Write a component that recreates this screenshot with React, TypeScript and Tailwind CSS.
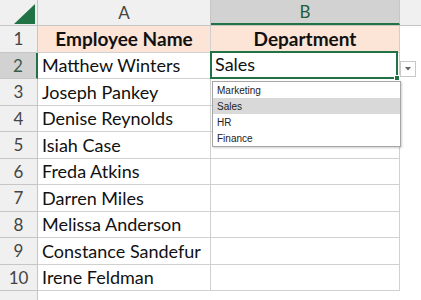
const names = [
  "Matthew Winters",
  "Joseph Pankey",
  "Denise Reynolds",
  "Isiah Case",
  "Freda Atkins",
  "Darren Miles",
  "Melissa Anderson",
  "Constance Sandefur",
  "Irene Feldman",
];

const options = ["Marketing", "Sales", "HR", "Finance"];

// row heights alternate so the grid lines land where Excel draws them
const rowHeights = ["h-[27px]", "h-[26px]"];

const App = () => {
  return (
    <div className="relative w-[421px] h-[300px] overflow-hidden bg-white font-['Lato',sans-serif] text-[#111]">
      {/* Column headers */}
      <div className="flex h-[26px] bg-[#f0f0f0] border-b border-[#c6c6c6]">
        <div className="relative w-[38px] shrink-0 border-r border-[#c6c6c6]">
          <svg className="absolute left-[14px] top-[4px]" width="21" height="20" viewBox="0 0 21 20">
            <polygon points="0,20 21,20 21,0" fill="#217346" />
          </svg>
        </div>
        <div className="w-[173px] shrink-0 flex items-center justify-center border-r border-[#c6c6c6] text-[17px] text-[#444]">
          A
        </div>
        <div className="w-[189px] shrink-0 flex items-center justify-center bg-[#d2d2d2] border-b-2 border-[#217346] border-r border-r-[#c6c6c6] text-[17px] text-[#1e5e3a]">
          B
        </div>
      </div>

      {/* Row 1: headings */}
      <div className="flex h-[27px]">
        <div className="w-[38px] shrink-0 flex items-center justify-center bg-[#f0f0f0] border-r border-b border-[#c6c6c6] text-[17px] text-[#444]">
          1
        </div>
        <div className="w-[173px] shrink-0 flex items-center justify-center bg-[#fce4d6] border-r border-b border-[#d0d0d0] text-[19px] font-bold">
          Employee Name
        </div>
        <div className="w-[189px] shrink-0 flex items-center justify-center bg-[#fce4d6] border-r border-b border-[#d0d0d0] text-[19px] font-bold">
          Department
        </div>
      </div>

      {/* Rows 2-10 */}
      {names.map((name, i) => {
        const selected = i === 0;
        return (
          <div key={name} className={`flex ${rowHeights[(i + 1) % 2]}`}>
            <div
              className={`w-[38px] shrink-0 flex items-center justify-center border-b border-[#c6c6c6] text-[17px] ${
                selected
                  ? "bg-[#d2d2d2] border-r-2 border-r-[#217346] text-[#3d5a4a]"
                  : "bg-[#f0f0f0] border-r border-r-[#c6c6c6] text-[#444]"
              }`}
            >
              {i + 2}
            </div>
            <div className="w-[173px] shrink-0 flex items-center pl-[4px] border-r border-b border-[#d0d0d0] text-[18px] whitespace-nowrap">
              {name}
            </div>
            <div className="w-[189px] shrink-0 flex items-center border-r border-b border-[#d0d0d0] text-[18px]">
              {selected && (
                <div className="relative flex items-center w-full h-[28px] -mt-[2px] -ml-px pl-[3px] border-2 border-[#217346]">
                  Sales
                  <span className="absolute -right-[4px] -bottom-[4px] w-[6px] h-[6px] bg-[#217346] border border-white" />
                </div>
              )}
            </div>
          </div>
        );
      })}

      {/* Row 11, cut off */}
      <div className="flex h-[26px]">
        <div className="w-[38px] shrink-0 flex items-start justify-center pt-[6px] bg-[#f0f0f0] border-r border-[#c6c6c6] text-[17px] leading-[20px] text-[#444]">
          11
        </div>
      </div>

      {/* Dropdown arrow button */}
      <div className="absolute left-[400px] top-[61px] w-[16px] h-[16px] flex items-center justify-center bg-white border border-[#c8c8c8]">
        <svg width="6" height="4" viewBox="0 0 6 4">
          <polygon points="0,0 6,0 3,3.5" fill="#666" />
        </svg>
      </div>

      {/* Dropdown list */}
      <div className="absolute left-[212px] top-[81px] w-[189px] h-[66px] bg-white border border-[#a6a6a6] shadow-[1px_1px_2px_rgba(0,0,0,0.2)] font-['Liberation_Sans',sans-serif] text-[10px] text-[#222]">
        {options.map((opt) => (
          <div
            key={opt}
            className={`h-[16px] flex items-center pl-[4px] ${opt === "Sales" ? "bg-[#d9d9d9]" : ""}`}
          >
            {opt}
          </div>
        ))}
      </div>
    </div>
  );
};

export default App;
